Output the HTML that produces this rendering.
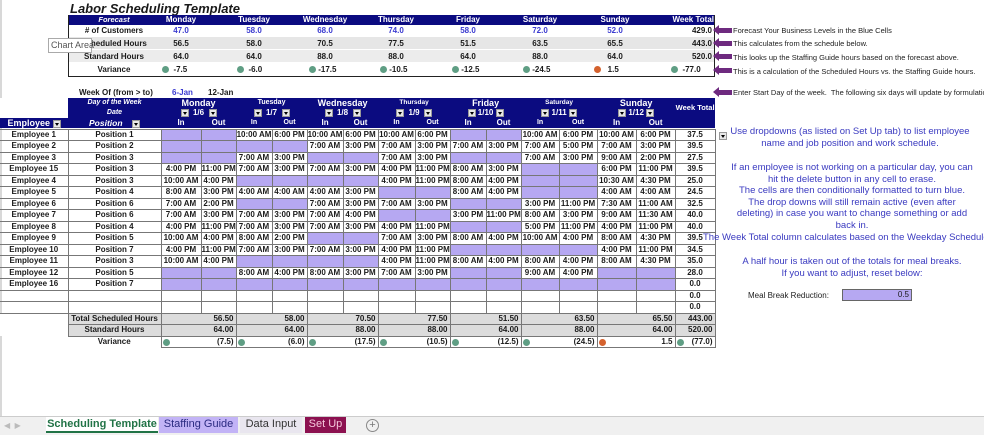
<!DOCTYPE html>
<html><head><meta charset="utf-8"><style>
*{margin:0;padding:0;box-sizing:border-box}
body{width:984px;height:435px;overflow:hidden;background:#fff;font-family:"Liberation Sans",Arial,sans-serif;position:relative;font-weight:bold;font-size:8px;color:#1a1a1a}
.a{position:absolute;white-space:nowrap}
.nav{background:#0b0b80;color:#fff}
.c{text-align:center}
.r{text-align:right}
.dot{display:inline-block;width:7px;height:7px;border-radius:50%;background:#5f9e84;vertical-align:middle}
.or{background:#d4622e}
.dd{display:inline-block;width:8px;height:8px;background:#e8e8e8;border:1px solid #999;position:relative;vertical-align:middle}
.dd:after{content:"";position:absolute;left:1px;top:2px;border-left:2.5px solid transparent;border-right:2.5px solid transparent;border-top:3px solid #000}
table{position:absolute;left:0;border-collapse:collapse;table-layout:fixed}
#g td{border:1px solid #777;height:11.5px;line-height:10px;font-size:8px;text-align:center;overflow:hidden;white-space:nowrap;padding:0}
#g td.p{background:#b6a8f2}
#g td.e{border-left:none}
#h td{height:10px;line-height:10px;font-size:8px;text-align:center;padding:0;white-space:nowrap;background:#0b0b80;color:#fff;overflow:hidden}
.arr{position:absolute;left:718px;width:14px;height:5px;background:#6e2a7f}
.arr:before{content:"";position:absolute;left:-5px;top:-3px;border-right:6px solid #6e2a7f;border-top:5.5px solid transparent;border-bottom:5.5px solid transparent}
.n{position:absolute;font-weight:normal;font-size:7.5px;color:#222;white-space:nowrap}
.b{position:absolute;font-weight:normal;color:#3a3ac0;font-size:9.5px;text-align:center;line-height:11.5px;white-space:nowrap}
.v{text-align:right!important;padding-right:2px!important;position:relative}
.v .dot{position:absolute;left:1px;top:2px}
</style></head><body>
<div style="position:absolute;left:0;top:0;width:2px;height:417px;background:#d8d8d8"></div>
<div class="a" style="left:70px;top:1px;font-size:13px;font-style:italic">Labor Scheduling Template</div>

<!-- top summary -->
<div class="a nav" style="left:68px;top:15px;width:647px;height:10px"></div>
<div class="a" style="left:68px;top:15px;width:647px;height:62px;border:1.5px solid #222;border-top:none"></div>
<div class="a" style="left:69px;top:37px;width:645px;height:12px;background:#e6e6e6"></div>
<div class="a" style="left:69px;top:50px;width:645px;height:12px;background:#ececec"></div>
<div class="a c" style="left:68px;top:15px;width:92px;color:#fff;font-style:italic;font-size:7.5px;line-height:10px">Forecast</div>
<div class="a c" style="left:68px;top:25px;width:92px;line-height:11px"># of Customers</div>
<div class="a c" style="left:68px;top:38px;width:92px;line-height:11px">Scheduled Hours</div>
<div class="a c" style="left:68px;top:51px;width:92px;line-height:11px">Standard Hours</div>
<div class="a c" style="left:68px;top:64px;width:92px;line-height:11px">Variance</div>
<div class="a" style="left:48px;top:38px;width:44px;height:15px;background:#fff;border:1px solid #aaa;font-weight:normal;color:#555;font-size:9px;line-height:13px;padding-left:2px">Chart Area</div>

<div class="a c" style="left:151px;top:15px;width:60px;color:#fff;line-height:10px">Monday</div>
<div class="a c" style="left:224px;top:15px;width:60px;color:#fff;line-height:10px">Tuesday</div>
<div class="a c" style="left:295px;top:15px;width:60px;color:#fff;line-height:10px">Wednesday</div>
<div class="a c" style="left:366px;top:15px;width:60px;color:#fff;line-height:10px">Thursday</div>
<div class="a c" style="left:438px;top:15px;width:60px;color:#fff;line-height:10px">Friday</div>
<div class="a c" style="left:510px;top:15px;width:60px;color:#fff;line-height:10px">Saturday</div>
<div class="a c" style="left:585px;top:15px;width:60px;color:#fff;line-height:10px">Sunday</div>
<div class="a r" style="left:650px;top:15px;width:64px;color:#fff;line-height:10px">Week Total</div>

<div class="a" style="top:25px;left:0;width:715px;line-height:11px;color:#3a3ad0">
<span class="a c" style="left:151px;width:60px">47.0</span><span class="a c" style="left:224px;width:60px">58.0</span><span class="a c" style="left:295px;width:60px">68.0</span><span class="a c" style="left:366px;width:60px">74.0</span><span class="a c" style="left:438px;width:60px">58.0</span><span class="a c" style="left:510px;width:60px">72.0</span><span class="a c" style="left:585px;width:60px">52.0</span><span class="a r" style="left:650px;width:62px;color:#1a1a1a">429.0</span></div>
<div class="a" style="top:38px;left:0;width:715px;line-height:11px">
<span class="a c" style="left:151px;width:60px">56.5</span><span class="a c" style="left:224px;width:60px">58.0</span><span class="a c" style="left:295px;width:60px">70.5</span><span class="a c" style="left:366px;width:60px">77.5</span><span class="a c" style="left:438px;width:60px">51.5</span><span class="a c" style="left:510px;width:60px">63.5</span><span class="a c" style="left:585px;width:60px">65.5</span><span class="a r" style="left:650px;width:62px">443.0</span></div>
<div class="a" style="top:51px;left:0;width:715px;line-height:11px">
<span class="a c" style="left:151px;width:60px">64.0</span><span class="a c" style="left:224px;width:60px">64.0</span><span class="a c" style="left:295px;width:60px">88.0</span><span class="a c" style="left:366px;width:60px">88.0</span><span class="a c" style="left:438px;width:60px">64.0</span><span class="a c" style="left:510px;width:60px">88.0</span><span class="a c" style="left:585px;width:60px">64.0</span><span class="a r" style="left:650px;width:62px">520.0</span></div>
<div class="a" style="top:64px;left:0;width:715px;line-height:11px">
<span class="a" style="left:162px"><span class="dot"></span> &nbsp;-7.5</span><span class="a" style="left:237px"><span class="dot"></span> &nbsp;-6.0</span><span class="a" style="left:309px"><span class="dot"></span> -17.5</span><span class="a" style="left:380px"><span class="dot"></span> -10.5</span><span class="a" style="left:452px"><span class="dot"></span> -12.5</span><span class="a" style="left:523px"><span class="dot"></span> -24.5</span><span class="a" style="left:594px"><span class="dot or"></span> &nbsp;&nbsp;1.5</span><span class="a" style="left:671px"><span class="dot"></span> &nbsp;-77.0</span></div>

<div class="arr" style="top:28px"></div><div class="arr" style="top:41px"></div><div class="arr" style="top:54px"></div><div class="arr" style="top:68px"></div><div class="arr" style="top:90px"></div>
<div class="n" style="left:733px;top:26px">Forecast Your Business Levels in the Blue Cells</div>
<div class="n" style="left:733px;top:39px">This calculates from the schedule below.</div>
<div class="n" style="left:733px;top:53px">This looks up the Staffing Guide hours based on the forecast above.</div>
<div class="n" style="left:733px;top:67px">This is a calculation of the Scheduled Hours vs. the Staffing Guide hours.</div>
<div class="n" style="left:733px;top:88px">Enter Start Day of the week.&nbsp; The following six days will update by formulation</div>

<div class="a" style="left:79px;top:88px;line-height:9px">Week Of (from &gt; to)</div>
<div class="a" style="left:172px;top:88px;line-height:9px;color:#3a3ad0">6-Jan</div>
<div class="a" style="left:208px;top:88px;line-height:9px">12-Jan</div>

<!-- header -->
<table id="h" style="top:98px;width:715px">
<colgroup><col style="width:68px"><col style="width:93px"><col style="width:40px"><col style="width:35px"><col style="width:36px"><col style="width:35px"><col style="width:36px"><col style="width:35px"><col style="width:37px"><col style="width:35px"><col style="width:36px"><col style="width:35px"><col style="width:38px"><col style="width:38px"><col style="width:39px"><col style="width:39px"><col style="width:40px"></colgroup>
<tr><td style="background:#fff"></td><td style="font-style:italic;font-size:7px">Day of the Week</td><td colspan="2" style="font-size:9px">Monday</td><td colspan="2" style="font-size:7px">Tuesday</td><td colspan="2" style="font-size:9px">Wednesday</td><td colspan="2" style="font-size:6.5px">Thursday</td><td colspan="2" style="font-size:9px">Friday</td><td colspan="2" style="font-size:6.5px">Saturday</td><td colspan="2" style="font-size:9px">Sunday</td><td rowspan="3" style="font-size:7.5px;vertical-align:top;line-height:20px">Week Total</td></tr>
<tr><td style="background:#fff"></td><td style="font-style:italic;font-size:7px">Date</td><td colspan="2"><span class="dd"></span> &nbsp;1/6 &nbsp;<span class="dd"></span></td><td colspan="2"><span class="dd"></span> &nbsp;1/7 &nbsp;<span class="dd"></span></td><td colspan="2"><span class="dd"></span> &nbsp;1/8 &nbsp;<span class="dd"></span></td><td colspan="2"><span class="dd"></span> &nbsp;1/9 &nbsp;<span class="dd"></span></td><td colspan="2"><span class="dd"></span> 1/10 <span class="dd"></span></td><td colspan="2"><span class="dd"></span> 1/11 <span class="dd"></span></td><td colspan="2"><span class="dd"></span> 1/12 <span class="dd"></span></td></tr>
<tr><td style="font-size:9px">Employee <span class="dd"></span></td><td style="font-style:italic;font-size:8.5px">Position &nbsp;&nbsp;&nbsp;<span class="dd"></span></td><td>In</td><td>Out</td><td style="font-size:7px">In</td><td style="font-size:7px">Out</td><td>In</td><td>Out</td><td style="font-size:7px">In</td><td style="font-size:7px">Out</td><td>In</td><td>Out</td><td style="font-size:7px">In</td><td style="font-size:7px">Out</td><td>In</td><td>Out</td></tr>
</table>

<!-- grid -->
<table id="g" style="top:128.5px;width:715px">
<colgroup><col style="width:68px"><col style="width:93px"><col style="width:40px"><col style="width:35px"><col style="width:36px"><col style="width:35px"><col style="width:36px"><col style="width:35px"><col style="width:37px"><col style="width:35px"><col style="width:36px"><col style="width:35px"><col style="width:38px"><col style="width:38px"><col style="width:39px"><col style="width:39px"><col style="width:40px"></colgroup>
<tr><td class="e">Employee 1</td><td>Position 1</td><td class="p"></td><td class="p"></td><td>10:00 AM</td><td>6:00 PM</td><td>10:00 AM</td><td>6:00 PM</td><td>10:00 AM</td><td>6:00 PM</td><td class="p"></td><td class="p"></td><td>10:00 AM</td><td>6:00 PM</td><td>10:00 AM</td><td>6:00 PM</td><td>37.5</td></tr>
<tr><td class="e">Employee 2</td><td>Position 2</td><td class="p"></td><td class="p"></td><td class="p"></td><td class="p"></td><td>7:00 AM</td><td>3:00 PM</td><td>7:00 AM</td><td>3:00 PM</td><td>7:00 AM</td><td>3:00 PM</td><td>7:00 AM</td><td>5:00 PM</td><td>7:00 AM</td><td>3:00 PM</td><td>39.5</td></tr>
<tr><td class="e">Employee 3</td><td>Position 3</td><td class="p"></td><td class="p"></td><td>7:00 AM</td><td>3:00 PM</td><td class="p"></td><td class="p"></td><td>7:00 AM</td><td>3:00 PM</td><td class="p"></td><td class="p"></td><td>7:00 AM</td><td>3:00 PM</td><td>9:00 AM</td><td>2:00 PM</td><td>27.5</td></tr>
<tr><td class="e">Employee 15</td><td>Position 3</td><td>4:00 PM</td><td>11:00 PM</td><td>7:00 AM</td><td>3:00 PM</td><td>7:00 AM</td><td>3:00 PM</td><td>4:00 PM</td><td>11:00 PM</td><td>8:00 AM</td><td>3:00 PM</td><td class="p"></td><td class="p"></td><td>6:00 PM</td><td>11:00 PM</td><td>39.5</td></tr>
<tr><td class="e">Employee 4</td><td>Position 3</td><td>10:00 AM</td><td>4:00 PM</td><td class="p"></td><td class="p"></td><td class="p"></td><td class="p"></td><td>4:00 PM</td><td>11:00 PM</td><td>8:00 AM</td><td>4:00 PM</td><td class="p"></td><td class="p"></td><td>10:30 AM</td><td>4:30 PM</td><td>25.0</td></tr>
<tr><td class="e">Employee 5</td><td>Position 4</td><td>8:00 AM</td><td>3:00 PM</td><td>4:00 AM</td><td>4:00 AM</td><td>4:00 AM</td><td>3:00 PM</td><td class="p"></td><td class="p"></td><td>8:00 AM</td><td>4:00 PM</td><td class="p"></td><td class="p"></td><td>4:00 AM</td><td>4:00 AM</td><td>24.5</td></tr>
<tr><td class="e">Employee 6</td><td>Position 6</td><td>7:00 AM</td><td>2:00 PM</td><td class="p"></td><td class="p"></td><td>7:00 AM</td><td>3:00 PM</td><td>7:00 AM</td><td>3:00 PM</td><td class="p"></td><td class="p"></td><td>3:00 PM</td><td>11:00 PM</td><td>7:30 AM</td><td>11:00 AM</td><td>32.5</td></tr>
<tr><td class="e">Employee 7</td><td>Position 6</td><td>7:00 AM</td><td>3:00 PM</td><td>7:00 AM</td><td>3:00 PM</td><td>7:00 AM</td><td>4:00 PM</td><td class="p"></td><td class="p"></td><td>3:00 PM</td><td>11:00 PM</td><td>8:00 AM</td><td>3:00 PM</td><td>9:00 AM</td><td>11:30 AM</td><td>40.0</td></tr>
<tr><td class="e">Employee 8</td><td>Position 4</td><td>4:00 PM</td><td>11:00 PM</td><td>7:00 AM</td><td>3:00 PM</td><td>7:00 AM</td><td>3:00 PM</td><td>4:00 PM</td><td>11:00 PM</td><td class="p"></td><td class="p"></td><td>5:00 PM</td><td>11:00 PM</td><td>4:00 PM</td><td>11:00 PM</td><td>40.0</td></tr>
<tr><td class="e">Employee 9</td><td>Position 5</td><td>10:00 AM</td><td>4:00 PM</td><td>8:00 AM</td><td>2:00 PM</td><td class="p"></td><td class="p"></td><td>7:00 AM</td><td>3:00 PM</td><td>8:00 AM</td><td>4:00 PM</td><td>10:00 AM</td><td>4:00 PM</td><td>8:00 AM</td><td>4:30 PM</td><td>39.5</td></tr>
<tr><td class="e">Employee 10</td><td>Position 7</td><td>4:00 PM</td><td>11:00 PM</td><td>7:00 AM</td><td>3:00 PM</td><td>7:00 AM</td><td>3:00 PM</td><td>4:00 PM</td><td>11:00 PM</td><td class="p"></td><td class="p"></td><td class="p"></td><td class="p"></td><td>4:00 PM</td><td>11:00 PM</td><td>34.5</td></tr>
<tr><td class="e">Employee 11</td><td>Position 3</td><td>10:00 AM</td><td>4:00 PM</td><td class="p"></td><td class="p"></td><td class="p"></td><td class="p"></td><td>4:00 PM</td><td>11:00 PM</td><td>8:00 AM</td><td>4:00 PM</td><td>8:00 AM</td><td>4:00 PM</td><td>8:00 AM</td><td>4:30 PM</td><td>35.0</td></tr>
<tr><td class="e">Employee 12</td><td>Position 5</td><td class="p"></td><td class="p"></td><td>8:00 AM</td><td>4:00 PM</td><td>8:00 AM</td><td>3:00 PM</td><td>7:00 AM</td><td>3:00 PM</td><td class="p"></td><td class="p"></td><td>9:00 AM</td><td>4:00 PM</td><td class="p"></td><td class="p"></td><td>28.0</td></tr>
<tr><td class="e">Employee 16</td><td>Position 7</td><td class="p"></td><td class="p"></td><td class="p"></td><td class="p"></td><td class="p"></td><td class="p"></td><td class="p"></td><td class="p"></td><td class="p"></td><td class="p"></td><td class="p"></td><td class="p"></td><td class="p"></td><td class="p"></td><td>0.0</td></tr>
<tr><td class="e"></td><td></td><td></td><td></td><td></td><td></td><td></td><td></td><td></td><td></td><td></td><td></td><td></td><td></td><td></td><td></td><td>0.0</td></tr>
<tr><td class="e"></td><td></td><td></td><td></td><td></td><td></td><td></td><td></td><td></td><td></td><td></td><td></td><td></td><td></td><td></td><td></td><td>0.0</td></tr>
<tr style="background:#dcdcdc"><td class="e" style="background:#fff;border-bottom:none"></td><td>Total Scheduled Hours</td><td colspan="2" class="v">56.50</td><td colspan="2" class="v">58.00</td><td colspan="2" class="v">70.50</td><td colspan="2" class="v">77.50</td><td colspan="2" class="v">51.50</td><td colspan="2" class="v">63.50</td><td colspan="2" class="v">65.50</td><td class="v">443.00</td></tr>
<tr style="background:#dcdcdc"><td class="e" style="background:#fff;border:none"></td><td>Standard Hours</td><td colspan="2" class="v">64.00</td><td colspan="2" class="v">64.00</td><td colspan="2" class="v">88.00</td><td colspan="2" class="v">88.00</td><td colspan="2" class="v">64.00</td><td colspan="2" class="v">88.00</td><td colspan="2" class="v">64.00</td><td class="v">520.00</td></tr>
<tr><td class="e" style="border:none"></td><td style="border:none">Variance</td><td colspan="2" class="v"><span class="dot"></span>(7.5)</td><td colspan="2" class="v"><span class="dot"></span>(6.0)</td><td colspan="2" class="v"><span class="dot"></span>(17.5)</td><td colspan="2" class="v"><span class="dot"></span>(10.5)</td><td colspan="2" class="v"><span class="dot"></span>(12.5)</td><td colspan="2" class="v"><span class="dot"></span>(24.5)</td><td colspan="2" class="v"><span class="dot or"></span>1.5</td><td class="v"><span class="dot"></span>(77.0)</td></tr>
</table>

<!-- right notes -->
<span class="dd a" style="left:719px;top:131px"></span>
<div class="b" style="left:730px;top:126px;width:240px">Use dropdowns (as listed on Set Up tab) to list employee<br>name and job position and work schedule.</div>
<div class="b" style="left:720px;top:162px;width:264px">If an employee is not working on a particular day, you can<br>hit the delete button in any cell to erase.<br>The cells are then conditionally formatted to turn blue.<br>The drop downs will still remain active (even after<br>deleting) in case you want to change something or add<br>back in.</div>
<div class="b" style="left:703px;top:232px;text-align:left">The Week Total column calculates based on the Weekday Schedule</div>
<div class="b" style="left:720px;top:256px;width:264px">A half hour is taken out of the totals for meal breaks.<br>If you want to adjust, reset below:</div>
<div class="n" style="left:748px;top:291px;font-size:8px">Meal Break Reduction:</div>
<div class="a" style="left:842px;top:289px;width:70px;height:12px;background:#b6a8f2;border:1px solid #666;font-weight:normal;text-align:right;padding-right:2px;line-height:10px;font-size:8px">0.5</div>

<!-- tab bar -->
<div class="a" style="left:0;top:416px;width:984px;height:19px;background:#f0f0f0;border-top:1px solid #ccc"></div>
<div class="a" style="left:4px;top:421px;color:#bbb;font-size:8px;font-weight:normal">◀ &nbsp;▶</div>
<div class="a" style="left:46px;top:417px;width:112px;height:16px;background:#fff;border-bottom:2px solid #217346;color:#217346;font-size:11px;line-height:15px;text-align:center">Scheduling Template</div>
<div class="a" style="left:159px;top:417px;width:79px;height:16px;background:#c2b3f6;color:#2a2a80;font-weight:normal;font-size:11px;line-height:15px;text-align:center">Staffing Guide</div>
<div class="a" style="left:240px;top:417px;width:62px;height:16px;background:#e9e6ef;color:#333;font-weight:normal;font-size:11px;line-height:15px;text-align:center">Data Input</div>
<div class="a" style="left:305px;top:417px;width:41px;height:16px;background:#8c1150;color:#f5c8dc;font-weight:normal;font-size:11px;line-height:15px;text-align:center">Set Up</div>
<div class="a" style="left:366px;top:419px;width:13px;height:13px;border:1px solid #888;border-radius:50%;color:#777;font-size:11px;line-height:11px;text-align:center;font-weight:normal">+</div>
</body></html>
